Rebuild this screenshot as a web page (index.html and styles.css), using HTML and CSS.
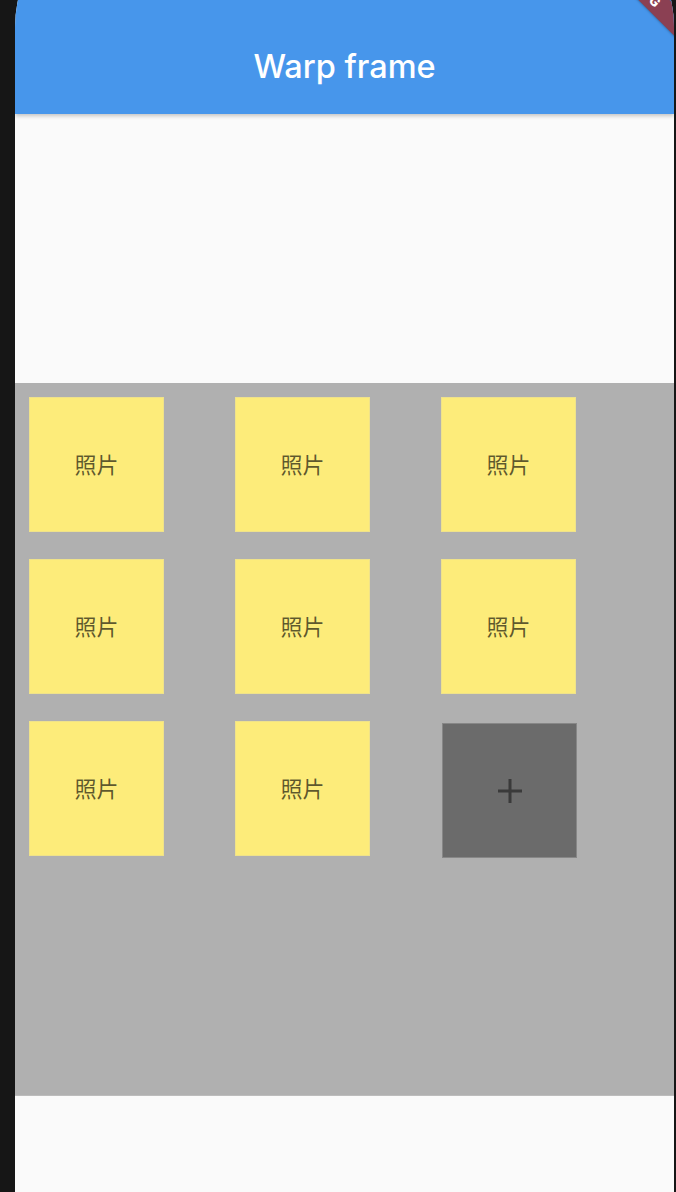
FILE: index.html
```html
<!DOCTYPE html>
<html lang="zh">
<head>
<meta charset="utf-8">
<title>Warp frame</title>
<link rel="stylesheet" href="styles.css">
</head>
<body>
<div class="device">
  <div class="screen">
    <header class="appbar">
      <h1 class="title">Warp frame</h1>
    </header>
    <div class="debug-banner">DEBUG</div>
    <div class="spacer"></div>
    <section class="wrap-area">
      <div class="grid">
        <div class="tile">照片</div>
        <div class="tile">照片</div>
        <div class="tile">照片</div>
        <div class="tile">照片</div>
        <div class="tile">照片</div>
        <div class="tile">照片</div>
        <div class="tile">照片</div>
        <div class="tile">照片</div>
        <div class="tile add">
          <svg class="plus" width="24" height="24" viewBox="0 0 24 24" aria-hidden="true">
            <path d="M12 0 V24 M0 12 H24" stroke="#3a3a3a" stroke-width="3" fill="none"/>
          </svg>
        </div>
      </div>
    </section>
  </div>
</div>
</body>
</html>
```
FILE: styles.css
```css
html, body {
  margin: 0;
  padding: 0;
  height: 100%;
  overflow: hidden;
}
body {
  background: #161616;
  font-family: "Noto Sans CJK SC", "Noto Sans", sans-serif;
}
.device {
  display: flex;
  padding-left: 15px;
  padding-right: 2px;
}
.screen {
  position: relative;
  width: 659px;
  height: 1288px;
  margin-top: -96px;
  background: #fafafa;
  border-radius: 123px 123px 0 0;
  overflow: hidden;
}
.appbar {
  position: relative;
  z-index: 1;
  box-sizing: border-box;
  height: 210px;
  padding-top: 143px;
  background: #4796eb;
  box-shadow: 0 2px 4px rgba(0, 0, 0, 0.22);
  display: flex;
  justify-content: center;
}
.title {
  margin: 0;
  font-family: Inter, Roboto, "Liberation Sans", sans-serif;
  font-weight: 500;
  font-size: 32.5px;
  line-height: 40px;
  color: #ffffff;
}
.debug-banner {
  position: absolute;
  z-index: 2;
  left: 547px;
  top: 73px;
  width: 160px;
  height: 22px;
  line-height: 22px;
  transform: rotate(45deg);
  background: #8b4053;
  box-shadow: 0 0 3px rgba(0, 0, 0, 0.45);
  color: #ffffff;
  font-family: Roboto, "Liberation Sans", sans-serif;
  font-weight: 900;
  font-size: 14px;
  text-align: center;
  letter-spacing: 0.5px;
}
.spacer {
  height: 269px;
}
.wrap-area {
  box-sizing: border-box;
  height: 713px;
  background: #b0b0b0;
  border-bottom: 1px solid #bcbcbc;
  padding: 14px 0 0 14px;
}
.grid {
  display: grid;
  grid-template-columns: repeat(3, 135px);
  grid-auto-rows: 135px;
  column-gap: 71px;
  row-gap: 27px;
}
.tile {
  box-sizing: border-box;
  width: 135px;
  height: 135px;
  padding-bottom: 3px;
  background: #fdec7a;
  border: 1px solid #efe28a;
  display: flex;
  align-items: center;
  justify-content: center;
  font-size: 22px;
  color: rgba(0, 0, 0, 0.64);
}
.tile.add {
  margin: 2px 0 0 1px;
  padding-bottom: 0;
  background: #6b6b6b;
  border-color: #878787;
}
.plus {
  display: block;
}
```
